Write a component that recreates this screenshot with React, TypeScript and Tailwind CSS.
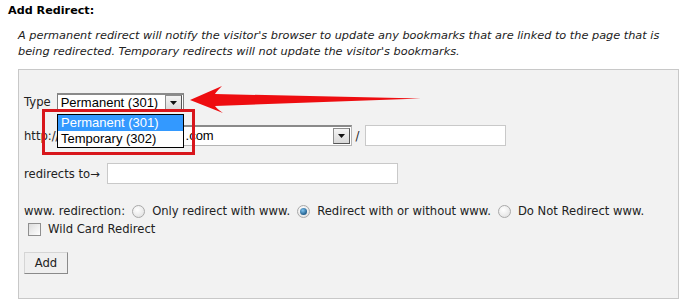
import React from 'react';

const verdana = '[font-family:Verdana,"DejaVu_Sans",sans-serif]';

function Arrow() {
  return (
    <span className="flex h-[16px] w-[17px] items-center justify-center border border-[#8d8d8d] border-b-[#555] border-r-[#555] bg-[linear-gradient(#f4f4f4,#d8d8d8)]">
      <svg width="7" height="4" viewBox="0 0 7 4">
        <path d="M0 0h7L3.5 4z" fill="#111" />
      </svg>
    </span>
  );
}

function Radio({ checked }: { checked?: boolean }) {
  return (
    <span className="mx-[7px] inline-flex h-[13px] w-[13px] items-center justify-center rounded-full border border-[#a9a9a9] bg-[radial-gradient(circle_at_40%_35%,#ffffff,#dcdcdc)]">
      {checked && (
        <span className="h-[7px] w-[7px] rounded-full bg-[radial-gradient(circle_at_40%_35%,#7fc4f0,#1f5d8c_70%)]" />
      )}
    </span>
  );
}

export default function App() {
  return (
    <div className={`relative h-[305px] w-[693px] overflow-hidden bg-white text-[11.6px] leading-[16px] text-[#222] ${verdana}`}>
      <h2 className="pl-[8px] pt-[3px] text-[11.2px] font-bold leading-[16px] text-black">Add Redirect:</h2>
      <p className="mt-[9px] whitespace-nowrap pl-[18px] text-[11.3px] italic leading-[16px]">
        A permanent redirect will notify the visitor's browser to update any bookmarks that are linked to the page that is
        <br />
        being redirected. Temporary redirects will not update the visitor's bookmarks.
      </p>

      <div className="ml-[18px] mt-[9px] h-[230px] w-[661px] border border-[#c8c8c8] bg-[#f2f2f2] pl-[5px]">
        <div className="mt-[23px] flex items-center">
          <span className="mr-[6px]">Type</span>
          <div className="flex h-[18px] w-[127px] items-center justify-between border border-[#7d7d7d] border-t-2 border-t-[#8a8a8a] bg-white pl-[3px] pr-[1px] font-['Liberation_Sans',Arial,sans-serif] text-[13px] text-black">
            <span>Permanent (301)</span>
            <Arrow />
          </div>
        </div>

        <div className="mt-[14px] flex items-center">
          <span>http://</span>
          <div className="ml-[2px] flex h-[21px] w-[290px] items-center justify-between border border-[#b5b5b5] border-t-2 border-t-[#8a8a8a] bg-white pr-[1px] font-['Liberation_Sans',Arial,sans-serif] text-[13px] text-black">
            <span className="pl-[123px]">.com</span>
            <Arrow />
          </div>
          <span className="ml-[4px] mr-[6px]">/</span>
          <div className="h-[21px] w-[141px] border border-[#c9c9c9] bg-white" />
        </div>

        <div className="mt-[17px] flex items-center">
          <span className="mr-[7px]">redirects to→</span>
          <div className="h-[21px] w-[291px] border border-[#c9c9c9] bg-white" />
        </div>

        <div className="mt-[19px] flex items-center">
          <span>www. redirection:</span>
          <Radio />
          <span>Only redirect with www.</span>
          <Radio checked />
          <span>Redirect with or without www.</span>
          <Radio />
          <span>Do Not Redirect www.</span>
        </div>

        <div className="mt-[2px] flex items-center pl-[4px]">
          <span className="mr-[7px] h-[13px] w-[13px] border border-[#8f8f8f] bg-[linear-gradient(135deg,#dcdcdc,#ffffff)]" />
          <span>Wild Card Redirect</span>
        </div>

        <button className="mt-[15px] h-[22px] w-[44px] border border-[#d5d5d5] border-b-[#8a8a8a] border-r-[#8a8a8a] bg-[#efefef] text-[11.6px] text-[#222]">
          Add
        </button>
      </div>

      {/* open option list */}
      <div className="absolute left-[57px] top-[114px] w-[127px] border border-black bg-white font-['Liberation_Sans',Arial,sans-serif] text-[13px] leading-[16px] text-black">
        <div className="bg-[#3399ff] pl-[3px] text-white">Permanent (301)</div>
        <div className="pl-[3px]">Temporary (302)</div>
      </div>

      {/* red annotation */}
      <div className="absolute left-[42px] top-[109px] h-[46px] w-[153px] border-[3px] border-[#d8161c]" />
      <svg className="absolute left-[188px] top-[85px]" width="236" height="30" viewBox="188 85 236 30">
        <path d="M190 100 L222 86 Q216 92 215 94 L421 98.5 L215 106 Q217 109 223 113 Z" fill="#ee0d10" />
      </svg>
    </div>
  );
}
